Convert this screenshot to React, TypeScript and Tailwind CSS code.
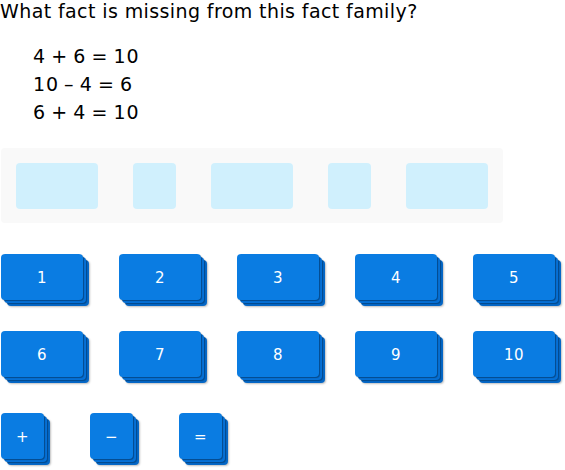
import React from "react";

function Tile({ label, wide }: { label: string; wide: boolean }) {
  const w = wide ? "w-[82px]" : "w-[43px]";
  const outer = wide ? "w-[88px]" : "w-[49px]";
  return (
    <div className={`relative h-[52px] ${outer}`}>
      <div className={`absolute left-[6px] top-[6px] h-[46px] ${w} rounded-[4px] bg-[#0567c6] shadow-[1px_1px_2px_rgba(0,0,0,0.25)]`} />
      <div className={`absolute left-[3px] top-[3px] h-[46px] ${w} rounded-[4px] bg-[#0670d6] shadow-[1px_1px_1px_rgba(0,0,0,0.3)]`} />
      <div className={`absolute left-0 top-0 flex h-[46px] ${w} items-center justify-center rounded-[4px] bg-[#0a7ce2] pt-[2px] text-[15px] tracking-[0.5px] text-white shadow-[1px_1px_1px_rgba(0,0,0,0.35)]`}>
        {label}
      </div>
    </div>
  );
}

export default function App() {
  const font = { fontFamily: '"DejaVu Sans", Verdana, sans-serif' };
  return (
    <div className="h-[470px] w-[565px] bg-white text-black" style={font}>
      <div className="pt-[0px] text-[19px] leading-[22px] tracking-[0.4px]">What fact is missing from this fact family?</div>
      <div className="mt-[20px] pl-[33px] text-[19px] leading-[28px] tracking-[0.8px] [word-spacing:-1.5px]">
        <div>4 + 6 = 10</div>
        <div>10 – 4 = 6</div>
        <div>6 + 4 = 10</div>
      </div>
      <div className="ml-[1px] mt-[22px] flex h-[75px] w-[502px] items-center gap-[35px] rounded-[4px] bg-[#f9f9f9] px-[15px]">
        <div className="h-[46px] w-[82px] rounded-[4px] bg-[#d0f0fd]" />
        <div className="h-[46px] w-[43px] rounded-[4px] bg-[#d0f0fd]" />
        <div className="h-[46px] w-[82px] rounded-[4px] bg-[#d0f0fd]" />
        <div className="h-[46px] w-[43px] rounded-[4px] bg-[#d0f0fd]" />
        <div className="h-[46px] w-[82px] rounded-[4px] bg-[#d0f0fd]" />
      </div>
      <div className="ml-[1px] mt-[31px] flex gap-[30px]">
        {["1", "2", "3", "4", "5"].map((l) => (
          <Tile key={l} label={l} wide />
        ))}
      </div>
      <div className="ml-[1px] mt-[25px] flex gap-[30px]">
        {["6", "7", "8", "9", "10"].map((l) => (
          <Tile key={l} label={l} wide />
        ))}
      </div>
      <div className="ml-[1px] mt-[30px] flex gap-[40px]">
        {["+", "−", "="].map((l) => (
          <Tile key={l} label={l} wide={false} />
        ))}
      </div>
    </div>
  );
}
